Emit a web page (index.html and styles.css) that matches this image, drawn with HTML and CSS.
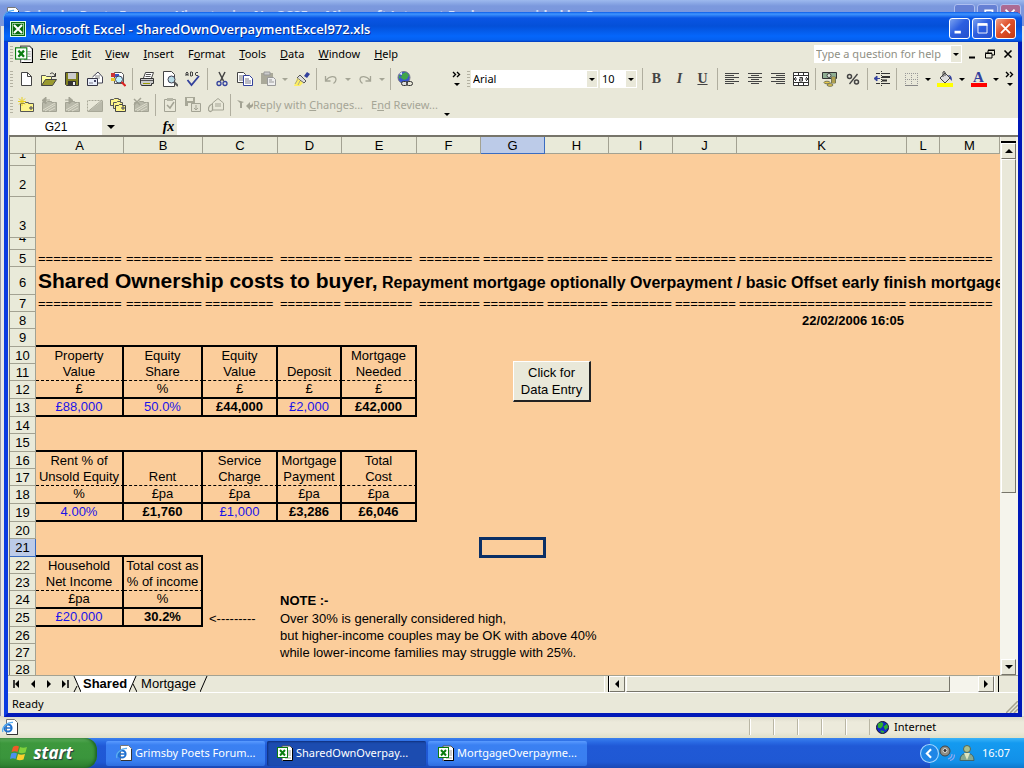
FILE: index.html
```html
<!DOCTYPE html>
<html lang="en">
<head>
    <meta charset="UTF-8">
    <meta name="viewport" content="width=device-width, initial-scale=1.0">
    <title>Microsoft Excel - SharedOwnOverpaymentExcel972.xls</title>
    <link rel="stylesheet" href="styles.css">
</head>
<body>
    <!-- Shared icons -->
    <svg class="defs" aria-hidden="true">
        <symbol id="excel" viewBox="0 0 16 16">
            <path d="M5 1h8l3 3v12H5z" fill="#fff" stroke="#555"/>
            <path d="M15.500 3v12.500H6" fill="none" stroke="#000"/>
            <path d="M11 6h3M11 8h3M11 10h3M8 13h6" stroke="#999"/>
            <rect x=".5" y="2.500" width="10" height="10" fill="#fff" stroke="#0a7d10"/>
            <path d="M3 5l5 5.500M8 5l-5 5.500" stroke="#0a7d10" stroke-width="2"/>
        </symbol>
        <symbol id="ie" viewBox="0 0 16 16">
            <path d="M4.500.500h8l3 3v12h-11z" fill="#fff" stroke="#777"/>
            <path d="M15.500 4v11.500H5" fill="none" stroke="#333"/>
            <circle cx="6" cy="9" r="3.600" fill="none" stroke="#1c6fd0" stroke-width="2"/>
            <path d="M3 9h6.500" stroke="#1c6fd0" stroke-width="1.500"/>
            <path d="M1 13C-1 9 5 3 11 3.500" fill="none" stroke="#5aaef0" stroke-width="1.300"/>
        </symbol>
        <symbol id="folder" viewBox="0 0 16 16">
            <path d="M1.500 14.500v-9h4l1-1h4v1h5v9z" fill="#b9b9aa" stroke="#a3a394"/>
            <path d="M2 13L14 6M4 14l10-6M8 14l6-3" stroke="#dddccc"/>
        </symbol>
    </svg>

    <main class="desktop">
        <section class="ie-window">
            <header class="ie-title">
                <svg class="ico" viewBox="0 0 16 16"><use href="#ie"/></svg>
                <span>Grimsby Poets Forum :: View topic - No GCSEs - Microsoft Internet Explorer provided by Freeserve</span>
                <div class="win-buttons">
                    <button aria-label="Minimise"><svg viewBox="0 0 21 21"><path d="M5 14h7" stroke="#fff" stroke-width="3"/></svg></button>
                    <button aria-label="Restore"><svg viewBox="0 0 21 21"><path d="M8 9V6h8v8h-3M5 9h8v7H5z" fill="none" stroke="#fff" stroke-width="2"/></svg></button>
                    <button class="close" aria-label="Close"><svg viewBox="0 0 21 21"><path d="M5 5l10 10M15 5L5 15" stroke="#fff" stroke-width="2"/></svg></button>
                </div>
            </header>
            <div class="ie-page"></div>
            <footer class="ie-status">
                <svg class="ico" viewBox="0 0 16 16"><use href="#ie"/></svg>
                <span class="ie-message"></span>
                <i></i><i></i><i></i><i></i><i></i>
                <span class="zone">
                    <svg viewBox="0 0 14 14"><circle cx="7" cy="7" r="6.500" fill="#1228c8" stroke="#112"/><path d="M2 3l4-2 2 2-1 3-2 2-3-1zM8 6l4-3 1 4-3 3zM5 10l4 1-1 2-3-1z" fill="#30b030"/></svg>
                    Internet
                </span>
            </footer>
        </section>

        <section class="excel-window">
            <header class="title-bar">
                <svg class="ico" viewBox="0 0 16 16"><rect x=".5" y=".5" width="15" height="15" fill="#0a6a0e" stroke="#dfe"/><rect x="2.500" y="2.500" width="11" height="11" fill="#0a6a0e" stroke="#9c9"/><path d="M4 4l8 8M12 4l-8 8" stroke="#fff" stroke-width="2"/></svg>
                <h1>Microsoft Excel - SharedOwnOverpaymentExcel972.xls</h1>
                <div class="win-buttons">
                    <button aria-label="Minimise"><svg viewBox="0 0 21 21"><path d="M5 14.500h7" stroke="#fff" stroke-width="3"/></svg></button>
                    <button aria-label="Maximise"><svg viewBox="0 0 21 21"><path d="M5.500 6v9.500h10V6" fill="none" stroke="#fff"/><path d="M5 6h11" stroke="#fff" stroke-width="3"/></svg></button>
                    <button class="close" aria-label="Close"><svg viewBox="0 0 21 21"><path d="M5.500 5.500l10 10M15.500 5.500l-10 10" stroke="#fff" stroke-width="2"/></svg></button>
                </div>
            </header>

            <nav class="menu-bar">
                <span class="grip"></span>
                <svg class="doc-ico" viewBox="0 0 16 16"><use href="#excel"/></svg>
                <a href="#"><u>F</u>ile</a>
                <a href="#"><u>E</u>dit</a>
                <a href="#"><u>V</u>iew</a>
                <a href="#"><u>I</u>nsert</a>
                <a href="#">F<u>o</u>rmat</a>
                <a href="#"><u>T</u>ools</a>
                <a href="#"><u>D</u>ata</a>
                <a href="#"><u>W</u>indow</a>
                <a href="#"><u>H</u>elp</a>
                <div class="combo ask">
                    <input type="text" aria-label="Help question" placeholder="Type a question for help">
                    <button aria-label="Show questions"><b class="down"></b></button>
                </div>
                <div class="doc-buttons">
                    <button aria-label="Minimise workbook"><svg viewBox="0 0 10 10"><path d="M2 8.500h6" stroke="#000" stroke-width="2"/></svg></button>
                    <button aria-label="Restore workbook"><svg viewBox="0 0 10 10"><path d="M3 4V1.500h6.500V6H7M3 1h7M.5 4.500h6.500v4.500H.5zM0 4h7" fill="none" stroke="#000"/></svg></button>
                    <button aria-label="Close workbook"><svg viewBox="0 0 10 10"><path d="M1.500 1.500l7 7M8.500 1.500l-7 7" stroke="#000" stroke-width="1.600"/></svg></button>
                </div>
            </nav>

            <div class="toolbar">
                <div class="tools standard">
                    <span class="grip"></span>
                    <button aria-label="New"><svg viewBox="0 0 16 16"><path d="M3.500 1.500h6l4 4v9h-10z" fill="#fff" stroke="#444"/><path d="M9.500 1.500v4h4" fill="none" stroke="#444"/></svg></button>
                    <button aria-label="Open"><svg viewBox="0 0 16 16"><path d="M.5 14.500v-10h4l1 1h5v3" fill="#ffffa0" stroke="#555"/><path d="M.5 14.500l4-6h11l-4 6z" fill="#9a9a30" stroke="#444"/><path d="M9 3c2-2 4-1 5 2M14.500 2v3.500H11" fill="none" stroke="#333"/></svg></button>
                    <button aria-label="Save"><svg viewBox="0 0 16 16"><path d="M1.500 1.500h13v13h-12l-1-1z" fill="#808020" stroke="#333"/><path d="M4 2h8v6H4z" fill="#ccc"/><path d="M4 10h8v4H4z" fill="#333"/><path d="M9 11h2v3H9z" fill="#eee"/></svg></button>
                    <button aria-label="E-mail"><svg viewBox="0 0 16 16"><path d="M5.500 6L11 1l4.500 5v6H11" fill="#fff" stroke="#445"/><path d="M8 5h5M8 7h5" stroke="#888"/><path d="M.5 7.500h10v7H.5z" fill="#e8eefa" stroke="#334"/><path d="M7 9h2v2H7z" fill="#446"/><path d="M2 12h4" stroke="#778"/></svg></button>
                    <button aria-label="Search"><svg viewBox="0 0 16 16"><path d="M4.500 1.500h7l2 2v9h-9z" fill="#fff" stroke="#555"/><path d="M1 2h4v4H1z" fill="#c33"/><path d="M5 3h4v3H5z" fill="#3b57c4"/><path d="M1 7h4v3H1z" fill="#e6c62c"/><circle cx="9" cy="8.500" r="3.500" fill="#bff0ff" stroke="#445"/><path d="M11.500 11l4 4" stroke="#d22" stroke-width="2"/></svg></button>
                    <i class="sep"></i>
                    <button aria-label="Print"><svg viewBox="0 0 16 16"><path d="M4.500 7l2-5.500h8l-2 5.500" fill="#fff" stroke="#444"/><path d="M1.500 7.500h13v5h-2v2h-10l-1-2z" fill="#ccc" stroke="#333"/><path d="M4 12.500h7" stroke="#990"/><path d="M2 9.500h12M7 3.500h5M6.500 5.500h5" stroke="#555"/></svg></button>
                    <button aria-label="Print preview"><svg viewBox="0 0 16 16"><path d="M1.500.500h8l3 3v12h-11z" fill="#fff" stroke="#444"/><circle cx="9.500" cy="8.500" r="3.500" fill="#b8dce8" stroke="#445"/><path d="M12 11l4 4" stroke="#555" stroke-width="2"/></svg></button>
                    <button aria-label="Spelling"><svg viewBox="0 0 16 16"><path d="M1 5V2l1-1 1 1v3M1 3.500h2M5.500 5V1H7l1 1-1 1 1 1-1 1zM13 1.500h-2l-.5.500v2l.5.500h2" fill="none" stroke="#444"/><path d="M2.500 9l4 5L14 5" fill="none" stroke="#33419c" stroke-width="1.800"/></svg></button>
                    <i class="sep"></i>
                    <button aria-label="Cut"><svg viewBox="0 0 16 16"><path d="M5 1l4.500 9M11 1L6.500 10" stroke="#444" stroke-width="1.500"/><circle cx="5" cy="12.500" r="2" fill="none" stroke="#33419c" stroke-width="1.300"/><circle cx="11" cy="12.500" r="2" fill="none" stroke="#33419c" stroke-width="1.300"/></svg></button>
                    <button aria-label="Copy"><svg viewBox="0 0 16 16"><path d="M.5 1.500h6l2 2v8h-8z" fill="#fff" stroke="#444"/><path d="M2 5h4M2 7h4M2 9h4" stroke="#777"/><path d="M6.500 4.500h6l3 3v7h-9z" fill="#fff" stroke="#33419c"/><path d="M8 8h4M8 10h6M8 12h6" stroke="#778"/></svg></button>
                    <button aria-label="Paste" disabled><svg viewBox="0 0 16 16"><path d="M1 2h12v11H1z" fill="#aaa99a"/><path d="M4 1h6v3H4z" fill="#ccc" stroke="#999"/><path d="M7.500 6.500h6l2 2v6h-8z" fill="#eee" stroke="#999"/><path d="M9 9h3M9 11h5" stroke="#999"/></svg></button>
                    <button class="drop" aria-label="Paste options" disabled><b class="down"></b></button>
                    <button aria-label="Format painter"><svg viewBox="0 0 16 16"><path d="M10 5l3-4 3 2-3 4z" fill="#33419c"/><path d="M6 4l6 6-2 2-7-5z" fill="#ddd" stroke="#555"/><path d="M3 7l6 5-3 3H0z" fill="#ffef60"/><path d="M4 8l-3 5M6 10l-2 4" stroke="#aa8"/></svg></button>
                    <i class="sep"></i>
                    <button aria-label="Undo" disabled><svg viewBox="0 0 16 16"><path d="M2.500 5v5h5M3 9.500C6 5 13 4 13 8.500c0 2-1 3-2.500 4" fill="none" stroke="#a5a596" stroke-width="1.300"/></svg></button>
                    <button class="drop" aria-label="Undo list" disabled><b class="down"></b></button>
                    <button aria-label="Redo" disabled><svg viewBox="0 0 16 16"><path d="M13.500 5v5h-5M13 9.500C10 5 3 4 3 8.500c0 2 1 3 2.500 4" fill="none" stroke="#a5a596" stroke-width="1.300"/></svg></button>
                    <button class="drop" aria-label="Redo list" disabled><b class="down"></b></button>
                    <i class="sep"></i>
                    <button aria-label="Hyperlink"><svg viewBox="0 0 16 16"><circle cx="7" cy="6.500" r="6" fill="#3a55cf" stroke="#778"/><path d="M5 3l4-2 3 3-2 4-3 1-3-2zM2 4l2 2-2 2z" fill="#3fa64a"/><path d="M2 3l3-2v3z" fill="#dfe8ff"/><rect x="4.500" y="10.500" width="6" height="4" rx="2" fill="#ddd" stroke="#333"/><rect x="9.500" y="10.500" width="6" height="4" rx="2" fill="none" stroke="#333"/></svg></button>
                    <button class="more" aria-label="More standard buttons"><svg viewBox="0 0 9 16"><path d="M1 1l2.500 2.500L1 6M5 1l2.500 2.500L5 6" fill="none" stroke="#000" stroke-width="1.400"/><path d="M2 12h6l-3 3z"/></svg></button>
                </div>
                <div class="tools">
                    <span class="grip"></span>
                    <div class="combo font-name">
                        <input type="text" aria-label="Font" value="Arial">
                        <button aria-label="Show fonts"><b class="down"></b></button>
                    </div>
                    <div class="combo font-size">
                        <input type="text" aria-label="Font size" value="10">
                        <button aria-label="Show sizes"><b class="down"></b></button>
                    </div>
                    <i class="sep"></i>
                    <button class="letter" aria-label="Bold"><b>B</b></button>
                    <button class="letter" aria-label="Italic"><em>I</em></button>
                    <button class="letter" aria-label="Underline"><u>U</u></button>
                    <i class="sep"></i>
                    <button aria-label="Align left"><svg viewBox="0 0 16 16"><path d="M1 2.500h14M1 4.500h9M1 6.500h14M1 8.500h9M1 10.500h14M1 12.500h9" stroke="#444"/></svg></button>
                    <button aria-label="Centre"><svg viewBox="0 0 16 16"><path d="M1 2.500h14M4 4.500h8M1 6.500h14M4 8.500h8M1 10.500h14M4 12.500h8" stroke="#444"/></svg></button>
                    <button aria-label="Align right"><svg viewBox="0 0 16 16"><path d="M1 2.500h14M6 4.500h9M1 6.500h14M6 8.500h9M1 10.500h14M6 12.500h9" stroke="#444"/></svg></button>
                    <button aria-label="Merge and centre"><svg viewBox="0 0 16 16"><path d="M.5 1.500h15v13H.5zM.5 4.500h15M.5 11.500h15M5.500 1.500v3M10.500 1.500v3M5.500 11.500v3M10.500 11.500v3" fill="#fff" stroke="#333"/><path d="M1 8h3M12 8h3M3 6L1 8l2 2M13 6l2 2-2 2M6.500 6.500h3v3.500h-3v-2h3" fill="none" stroke="#333"/></svg></button>
                    <i class="sep"></i>
                    <button aria-label="Currency"><svg viewBox="0 0 16 16"><path d="M.5 1.500h14v6H.5z" fill="#8fae92" stroke="#333"/><circle cx="7" cy="4.500" r="2" fill="#dfe8df" stroke="#444"/><path d="M9.500 6h4v6h-4z" fill="#e8c94a" stroke="#775"/><path d="M9 8h5M9 10h5" stroke="#775"/><ellipse cx="5" cy="11.500" rx="3" ry="1.300" fill="#e8c94a" stroke="#775"/><ellipse cx="8" cy="14" rx="3" ry="1.300" fill="#e8c94a" stroke="#775"/></svg></button>
                    <button aria-label="Percent"><svg viewBox="0 0 16 16"><path d="M12.500 3l-8 10" stroke="#444" stroke-width="1.300"/><circle cx="4.500" cy="5.500" r="2" fill="none" stroke="#444" stroke-width="1.500"/><circle cx="11.500" cy="11" r="2" fill="none" stroke="#444" stroke-width="1.500"/></svg></button>
                    <i class="sep"></i>
                    <button aria-label="Decrease indent"><svg viewBox="0 0 16 16"><path d="M2 2.500h4M8 2.500h8M2 12.500h4M8 12.500h8" stroke="#333"/><path d="M8 6h8M8 9.500h5" stroke="#333" stroke-width="2"/><path d="M7.500 0v16" stroke="#333" stroke-dasharray="1 1"/><path d="M3 5L0 7.500 3 10zM2 7.500h4" fill="#33419c" stroke="#33419c"/></svg></button>
                    <i class="sep"></i>
                    <button aria-label="Borders"><svg viewBox="0 0 16 16"><path d="M2 2.500h13M2 8.500h13M2.500 2v12M8.500 2v12M14.500 2v12" stroke="#999" stroke-dasharray="1 1"/><path d="M2 14.500h13" stroke="#888"/></svg></button>
                    <button class="drop" aria-label="Border styles"><b class="down"></b></button>
                    <button aria-label="Fill colour"><svg viewBox="0 0 16 16"><path d="M3 7l5-5 5 5-5 5z" fill="#ddd" stroke="#444"/><path d="M6 6V1q1-1 2 0v4" fill="none" stroke="#444"/><path d="M11 4c3 0 4 2 4 6l-2-2V6z" fill="#33419c"/><path d="M0 12h16v4H0z" fill="#ff0"/></svg></button>
                    <button class="drop" aria-label="Fill colours"><b class="down"></b></button>
                    <button class="font-colour" aria-label="Font colour"><b>A</b></button>
                    <button class="drop" aria-label="Font colours"><b class="down"></b></button>
                    <button class="more" aria-label="More formatting buttons"><svg viewBox="0 0 9 16"><path d="M1 1l2.500 2.500L1 6M5 1l2.500 2.500L5 6" fill="none" stroke="#000" stroke-width="1.400"/><path d="M2 12h6l-3 3z"/></svg></button>
                </div>
            </div>

            <div class="toolbar">
                <div class="tools">
                    <span class="grip"></span>
                    <button aria-label="New comment"><svg viewBox="0 0 16 16"><path d="M2.500 14.500v-8h4l1-1h3v1h5v8z" fill="#fff68a" stroke="#555"/><path d="M12 10h2v2h-2z" fill="#fff" stroke="#444"/><path d="M4 0v9M0 4.500h8M1 1.500l6 6M7 1.500l-6 6" stroke="#e8cf20"/></svg></button>
                    <button aria-label="Previous comment" disabled><svg viewBox="0 0 16 16"><use href="#folder"/><path d="M9 3H5M5 0v7L1 3.500z" fill="#a3a394" stroke="#a3a394"/></svg></button>
                    <button aria-label="Next comment" disabled><svg viewBox="0 0 16 16"><use href="#folder"/><path d="M1 3h4M5 0v7l4-3.500z" fill="#a3a394" stroke="#a3a394"/></svg></button>
                    <button aria-label="Show comment" disabled><svg viewBox="0 0 16 16"><path d="M.5 14.500v-11h15" fill="none" stroke="#a8a898" stroke-dasharray="2 1"/><path d="M15 4v10H2z" fill="#b9b9aa"/><path d="M15 3L1 14.500h14.500V4" fill="none" stroke="#a8a898"/></svg></button>
                    <button aria-label="Show all comments"><svg viewBox="0 0 16 16"><path d="M.5 8.500v-6h3l1-1h4v1h2v6z" fill="#fff68a" stroke="#555"/><path d="M3.500 11.500v-6h3l1-1h3v1h2v6z" fill="#fff68a" stroke="#555"/><path d="M5.500 14.500v-6h3l1-1h3v1h3v6z" fill="#fff68a" stroke="#444"/><path d="M12 10h2v2h-2z" fill="#fff" stroke="#444"/></svg></button>
                    <button aria-label="Delete comment" disabled><svg viewBox="0 0 16 16"><use href="#folder"/><path d="M1 2l6 6M8 1L1 8" stroke="#a3a394" stroke-width="1.500"/></svg></button>
                    <i class="sep"></i>
                    <button aria-label="Create task" disabled><svg viewBox="0 0 16 16"><path d="M2.500 2.500h11v12h-11z" fill="none" stroke="#a3a394"/><path d="M5 1h6v3H5z" fill="#b5b5a6"/><path d="M5 8l3 3 4-6" fill="none" stroke="#a3a394" stroke-width="1.500"/></svg></button>
                    <button aria-label="Update file" disabled><svg viewBox="0 0 16 16"><path d="M0 0h10v9H0z" fill="#a8a898"/><path d="M2 1h6v3H2zM3 6h3v3H3z" fill="#e9e8d8"/><path d="M6.500 6.500h9v8h-9z" fill="#e2e1d2" stroke="#a3a394"/><path d="M11 8v5M9 11l2 2 2-2" fill="none" stroke="#a3a394"/></svg></button>
                    <button aria-label="Send as attachment" disabled><svg viewBox="0 0 16 16"><path d="M4.500 6L10 1.500 15.500 6v7h-11z" fill="none" stroke="#a3a394"/><path d="M7 7h6M7 9h6" stroke="#a3a394"/><path d="M4 7q-4 2-3.500 6 2 3 4 0V9" fill="none" stroke="#a3a394" stroke-width="1.300"/></svg></button>
                    <i class="sep"></i>
                    <button class="text" disabled><svg viewBox="0 0 16 16"><path d="M0 3l7 2-2 1v5H3V6zM9 9l4-4v3q3 0 3-4v5q-1 2-3 2v2z" fill="#a3a394"/></svg><span>Reply with <u>C</u>hanges...</span></button>
                    <button class="text" disabled><span>E<u>n</u>d Review...</span></button>
                    <button class="drop low" aria-label="Toolbar options"><b class="down"></b></button>
                </div>
            </div>

            <div class="formula-bar">
                <input class="name-box" type="text" aria-label="Name box" value="G21">
                <button class="names" aria-label="Show names"><b class="down"></b></button>
                <button class="fx" aria-label="Insert function">fx</button>
                <input class="formula" type="text" aria-label="Formula">
            </div>

            <div class="workbook">
                <div class="sheet">
                    <table>
                        <colgroup>
                            <col class="w26"><col class="w88"><col class="w79"><col class="w75"><col class="w64"><col class="w75"><col class="w64"><col class="w64"><col class="w64"><col class="w64"><col class="w64"><col class="w170"><col class="w33"><col>
                        </colgroup>
                        <thead>
                            <tr><th></th><th>A</th><th>B</th><th>C</th><th>D</th><th>E</th><th>F</th><th class="current">G</th><th>H</th><th>I</th><th>J</th><th>K</th><th>L</th><th>M</th></tr>
                        </thead>
                        <tbody>
                            <tr class="h12"><th><div class="squashed">1</div></th><td colspan="13"></td></tr>
                            <tr class="h31"><th>2</th><td colspan="13"></td></tr>
                            <tr class="h41"><th>3</th><td colspan="13"></td></tr>
                            <tr class="h12"><th><div class="squashed">4</div></th><td colspan="13"></td></tr>
                            <tr><th>5</th><td>===========</td><td>==========</td><td>=========</td><td>========</td><td>=========</td><td>========</td><td>========</td><td>========</td><td>========</td><td>========</td><td>======================</td><td colspan="2">===========</td></tr>
                            <tr class="h27"><th>6</th><td class="heading" colspan="13"><strong>Shared Ownership costs to buyer,</strong> Repayment mortgage optionally Overpayment / basic Offset early finish mortgage</td></tr>
                            <tr><th>7</th><td>===========</td><td>==========</td><td>=========</td><td>========</td><td>=========</td><td>========</td><td>========</td><td>========</td><td>========</td><td>========</td><td>======================</td><td colspan="2">===========</td></tr>
                            <tr><th>8</th><td colspan="10"></td><td class="date total">22/02/2006 16:05</td><td colspan="2"></td></tr>
                            <tr class="h18"><th>9</th><td class="rule" colspan="5"></td><td colspan="8"></td></tr>

                            <tr><th>10</th><td class="box">Property</td><td class="box">Equity</td><td class="box">Equity</td><td class="box"></td><td class="box">Mortgage</td><td colspan="8"></td></tr>
                            <tr class="dash"><th>11</th><td class="box">Value</td><td class="box">Share</td><td class="box">Value</td><td class="box">Deposit</td><td class="box">Needed</td><td colspan="8"></td></tr>
                            <tr class="h18"><th>12</th><td class="box rule">£</td><td class="box rule">%</td><td class="box rule">£</td><td class="box rule">£</td><td class="box rule">£</td><td colspan="8"></td></tr>
                            <tr class="h18"><th>13</th><td class="box rule entry">£88,000</td><td class="box rule entry">50.0%</td><td class="box rule total">£44,000</td><td class="box rule entry">£2,000</td><td class="box rule total">£42,000</td><td colspan="8"></td></tr>
                            <tr><th>14</th><td colspan="13"></td></tr>
                            <tr class="h18"><th>15</th><td class="rule" colspan="5"></td><td colspan="8"></td></tr>

                            <tr><th>16</th><td class="box">Rent % of</td><td class="box"></td><td class="box">Service</td><td class="box">Mortgage</td><td class="box">Total</td><td colspan="8"></td></tr>
                            <tr class="dash"><th>17</th><td class="box">Unsold Equity</td><td class="box">Rent</td><td class="box">Charge</td><td class="box">Payment</td><td class="box">Cost</td><td colspan="8"></td></tr>
                            <tr class="h18"><th>18</th><td class="box rule">%</td><td class="box rule">£pa</td><td class="box rule">£pa</td><td class="box rule">£pa</td><td class="box rule">£pa</td><td colspan="8"></td></tr>
                            <tr class="h18"><th>19</th><td class="box rule entry">4.00%</td><td class="box rule total">£1,760</td><td class="box rule entry">£1,000</td><td class="box rule total">£3,286</td><td class="box rule total">£6,046</td><td colspan="8"></td></tr>
                            <tr><th>20</th><td colspan="13"></td></tr>
                            <tr class="h18"><th class="current">21</th><td class="rule" colspan="2"></td><td colspan="4"></td><td class="selected"></td><td colspan="6"></td></tr>

                            <tr><th>22</th><td class="box">Household</td><td class="box">Total cost as</td><td colspan="11"></td></tr>
                            <tr class="dash"><th>23</th><td class="box">Net Income</td><td class="box">% of income</td><td colspan="11"></td></tr>
                            <tr class="h18"><th>24</th><td class="box rule">£pa</td><td class="box rule">%</td><td></td><td class="total" colspan="10">NOTE :-</td></tr>
                            <tr class="h18"><th>25</th><td class="box rule entry">£20,000</td><td class="box rule total">30.2%</td><td class="arrow">&lt;---------</td><td colspan="10">Over 30% is generally considered high,</td></tr>
                            <tr><th>26</th><td colspan="3"></td><td colspan="10">but higher-income couples may be OK with above 40%</td></tr>
                            <tr><th>27</th><td colspan="3"></td><td colspan="10">while lower-income families may struggle with 25%.</td></tr>
                            <tr><th>28</th><td colspan="13"></td></tr>
                        </tbody>
                    </table>
                    <button class="data-entry">Click for<br>Data Entry</button>
                </div>
                <div class="vscroll">
                    <span class="split"></span>
                    <button aria-label="Scroll up"><b class="up"></b></button>
                    <span class="thumb"></span>
                    <span class="track"></span>
                    <button aria-label="Scroll down"><b class="down"></b></button>
                </div>
            </div>

            <div class="sheet-tabs">
                <button class="nav" aria-label="First sheet"><svg viewBox="0 0 8 8"><path d="M1 0v8" stroke="#000" stroke-width="1.500"/><path d="M6 0v8L2 4z"/></svg></button>
                <button class="nav" aria-label="Previous sheet"><svg viewBox="0 0 8 8"><path d="M6 0v8L2 4z"/></svg></button>
                <button class="nav" aria-label="Next sheet"><svg viewBox="0 0 8 8"><path d="M2 0v8l4-4z"/></svg></button>
                <button class="nav" aria-label="Last sheet"><svg viewBox="0 0 8 8"><path d="M1 0v8l4-4z"/><path d="M7 0v8" stroke="#000" stroke-width="1.500"/></svg></button>
                <svg class="edge" viewBox="0 0 8 16"><path d="M1 0h7v16z" fill="#fff"/><path d="M1 0l7 16M4 10l-3 6" stroke="#000"/></svg>
                <button class="tab active">Shared</button>
                <svg class="edge" viewBox="0 0 8 16"><path d="M0 0h7L0 16z" fill="#fff"/><path d="M7 0L0 16M4 8l4 8" stroke="#000"/></svg>
                <button class="tab">Mortgage</button>
                <svg class="edge" viewBox="0 0 8 16"><path d="M7 0L0 16" stroke="#000"/></svg>
                <div class="hscroll">
                    <span class="split"></span>
                    <button aria-label="Scroll left"><b class="left"></b></button>
                    <span class="thumb"></span>
                    <span class="track"></span>
                    <button aria-label="Scroll right"><b class="right"></b></button>
                    <span class="split"></span>
                </div>
            </div>

            <footer class="status-bar">
                <span>Ready</span>
                <svg viewBox="0 0 12 12"><path d="M0 12L12 0M4 12l8-8M8 12l4-4" stroke="#a5a28e" stroke-width="1.500"/></svg>
            </footer>
        </section>
    </main>

    <footer class="taskbar">
        <button class="start">
            <svg viewBox="0 0 20 18"><path d="M3 3q3-2 6-.5L7.500 8Q5 6.500 1.500 8z" fill="#ef5b28"/><path d="M10 3q3 1.500 7 0l-1.500 5.500q-4 1.500-7 0z" fill="#7fd13b"/><path d="M1.200 9.500Q4 8 7 9.500L5.500 15Q3 13.500 0 15z" fill="#4a90ee"/><path d="M8 10q3 1.500 7 0l-1.500 5.500q-4 1.500-7 0z" fill="#fbd02d"/></svg>
            start
        </button>
        <button class="task"><svg class="ico" viewBox="0 0 16 16"><use href="#ie"/></svg>Grimsby Poets Forum...</button>
        <button class="task active"><svg class="ico" viewBox="0 0 16 16"><use href="#excel"/></svg>SharedOwnOverpay...</button>
        <button class="task"><svg class="ico" viewBox="0 0 16 16"><use href="#excel"/></svg>MortgageOverpayme...</button>
        <div class="tray">
            <button class="expand" aria-label="Show hidden icons"><svg viewBox="0 0 18 18"><circle cx="9" cy="9" r="8.500" fill="#1f86e6" stroke="#a8d8ff"/><path d="M10.500 5L6.500 9l4 4" fill="none" stroke="#fff" stroke-width="2"/></svg></button>
            <svg class="ico" viewBox="0 0 16 16"><circle cx="6" cy="6" r="5" fill="#8f8f85" stroke="#444"/><circle cx="6" cy="5.500" r="2" fill="#333" stroke="#ddd"/><path d="M9 14q4-1 4-5M11 15.500q4.500-1 4.500-6" fill="none" stroke="#8ea8f0" stroke-width="1.200"/></svg>
            <svg class="ico" viewBox="0 0 16 16"><path d="M1 15.500q0-6 5-7h4q5 1 5 7z" fill="#86a890" stroke="#466"/><path d="M5 8l3 7 3-7z" fill="#dfe6c0"/><circle cx="8" cy="4" r="3.500" fill="#a9c08c" stroke="#565"/></svg>
            <time>16:07</time>
        </div>
    </footer>
</body>
</html>
```
FILE: styles.css
```css
* {
    box-sizing: border-box;
}
body {
    margin: 0;
    height: 100vh;
    display: flex;
    flex-direction: column;
    overflow: hidden;
    font-family: "Noto Sans", sans-serif;
    font-size: 11px;
    line-height: 16px;
    color: #000;
}
button, input {
    font: inherit;
    color: inherit;
    margin: 0;
    padding: 0;
    border: none;
    background: none;
    border-radius: 0;
}
button {
    display: flex;
    align-items: center;
    justify-content: center;
    flex-shrink: 0;
}
svg {
    flex-shrink: 0;
}
.defs {
    display: none;
}
.ico {
    width: 16px;
    height: 16px;
}

/* small arrows */
.down, .up, .left, .right {
    width: 0;
    height: 0;
    border: 3px solid transparent;
}
.down {
    border-top-color: #000;
    border-bottom: none;
}
.up {
    border-bottom-color: #000;
    border-top: none;
}
.left {
    border-width: 4px;
    border-right-color: #000;
    border-left: none;
}
.right {
    border-width: 4px;
    border-left-color: #000;
    border-right: none;
}
:disabled .down {
    border-top-color: #a5a596;
}

/* browser window behind */
.desktop {
    flex: 1;
    min-height: 0;
    position: relative;
}
.ie-window {
    height: 100%;
    display: flex;
    flex-direction: column;
    background: #eceadd;
}
.ie-title {
    height: 26px;
    padding: 3px 3px 0 3px;
    display: flex;
    align-items: center;
    gap: 3px;
    overflow: hidden;
    background: linear-gradient(#9db9ee, #7b98dd 6px, #7a95dc);
    color: #d5dff8;
    font-family: "Open Sans", sans-serif;
    font-weight: 700;
    font-size: 13px;
    white-space: nowrap;
}
.ie-page {
    flex: 1;
    background: #e6e6e6;
    border-left: 1px solid #99a;
}
.ie-status {
    height: 22px;
    padding: 0 2px;
    display: flex;
    align-items: center;
    background: linear-gradient(#d9d7c8, #eceadb 6px, #eceadb 16px, #dfe0c8);
}
.ie-message {
    flex: 1;
}
.ie-status i {
    width: 24px;
    height: 16px;
    border-left: 1px solid #b9b6a4;
    box-shadow: inset 1px 0 #fff;
}
.zone {
    width: 153px;
    height: 16px;
    padding-left: 6px;
    display: flex;
    align-items: center;
    gap: 5px;
    border-left: 1px solid #b9b6a4;
}
.zone svg {
    width: 13px;
    height: 13px;
}
.win-buttons {
    margin-left: auto;
    display: flex;
    gap: 2px;
}
.win-buttons button {
    width: 21px;
    height: 21px;
    border: 1px solid #fff;
    border-radius: 3px;
    background: linear-gradient(135deg, #7ba2f0, #2d5fe0 45%, #2450cc);
}
.win-buttons .close {
    background: linear-gradient(135deg, #f0a088, #e0512b 45%, #c23a14);
}
.ie-title .win-buttons button {
    border-color: #aebff0;
    background: #6580d4;
}
.ie-title .win-buttons .close {
    background: #ac6a92;
}

/* excel window */
.excel-window {
    position: absolute;
    top: 12px;
    right: 2px;
    bottom: 21px;
    left: 4px;
    display: flex;
    flex-direction: column;
    border: 4px solid #0a3ae0;
    border-top: none;
    border-color: #0a3ae0 #0018b8 #0018b8 #0a3ae0;
    border-radius: 7px 7px 0 0;
    background: #e9e8d9;
}
.title-bar {
    height: 30px;
    margin: 0 -4px;
    padding: 3px 6px 0 6px;
    display: flex;
    align-items: center;
    gap: 4px;
    border-radius: 7px 7px 0 0;
    background: linear-gradient(#0a5be8, #3f95ff 2px, #0a55e4 6px, #0450d8 14px, #0566fb 24px, #0560f0 28px, #0338b8);
    color: #fff;
}
.title-bar h1 {
    margin: 0;
    font-family: "Open Sans", sans-serif;
    font-size: 13px;
    font-weight: 600;
    white-space: nowrap;
    text-shadow: 1px 1px #0b2c8c;
}
.grip {
    width: 3px;
    height: 16px;
    margin: 0 1px 0 2px;
    background: repeating-linear-gradient(#b4b2a2 0 1px, transparent 1px 3px);
}
.menu-bar {
    height: 24px;
    display: flex;
    align-items: center;
    white-space: nowrap;
}
.menu-bar a {
    padding: 0 7px;
    color: #000;
    text-decoration: none;
}
.doc-ico {
    width: 18px;
    height: 18px;
    margin-left: 1px;
}
.combo {
    height: 18px;
    display: flex;
    background: #fff;
}
.combo input {
    flex: 1;
    min-width: 0;
    padding-left: 2px;
}
.combo input::placeholder {
    color: #8f8f84;
}
.combo button {
    width: 12px;
    border: 1px solid #fff;
    background: #e9e8d9;
}
.ask {
    width: 148px;
    margin-left: auto;
}
.doc-buttons {
    display: flex;
    gap: 8px;
    padding: 0 5px 0 5px;
}
.doc-buttons svg {
    width: 10px;
    height: 10px;
}

/* toolbars */
.toolbar {
    height: 26px;
    display: flex;
    align-items: center;
}
.tools {
    display: flex;
    align-items: center;
}
.standard {
    width: 458px;
}
.tools button {
    width: 23px;
    height: 22px;
}
.tools button svg {
    width: 16px;
    height: 16px;
}
.tools .drop {
    width: 11px;
}
.tools .low {
    align-items: flex-end;
}
.tools .more {
    width: 17px;
}
.tools .more svg {
    width: 9px;
    height: 16px;
}
.standard .more {
    margin-left: auto;
}
.tools .combo {
    margin-right: 2px;
}
.tools .combo button {
    width: 12px;
    height: 18px;
}
.font-name {
    width: 127px;
}
.font-size {
    width: 37px;
}
.sep {
    width: 6px;
    height: 22px;
    background: linear-gradient(#b0ae9f, #b0ae9f) center / 1px 100% no-repeat;
}
.tools .letter {
    font-family: "Liberation Serif", serif;
    font-size: 14px;
    font-weight: 700;
    color: #444;
}
.tools .font-colour {
    font-family: "Liberation Serif", serif;
    font-size: 15px;
    line-height: 12px;
    color: #33419c;
}
.font-colour b {
    width: 16px;
    border-bottom: 4px solid #f00;
}
.tools .text {
    width: auto;
    padding: 0 4px;
    color: #a5a596;
    white-space: nowrap;
}

/* formula bar */
.formula-bar {
    height: 17px;
    padding-left: 2px;
    display: flex;
}
.name-box {
    width: 92px;
    text-align: center;
    background: #fff;
    font-family: "Liberation Sans", sans-serif;
    font-size: 12px;
}
.names {
    width: 18px;
}
.names .down {
    border-width: 4px 4px 0;
}
.fx {
    width: 57px;
    padding-left: 40px;
    font-family: "Liberation Serif", serif;
    font-size: 14px;
    font-style: italic;
    font-weight: 700;
}
.formula {
    flex: 1;
    background: #fff;
}

/* sheet */
.workbook {
    flex: 1;
    min-height: 0;
    margin-left: 1px;
    display: flex;
    border-top: 2px solid #77756a;
    border-left: 1px solid #77756a;
}
.sheet {
    flex: 1;
    min-width: 0;
    position: relative;
    overflow: hidden;
    background: #fbcd9b;
    font-family: "Liberation Sans", sans-serif;
    font-size: 13px;
    line-height: 15px;
}
table {
    width: 100%;
    table-layout: fixed;
    border-collapse: separate;
    border-spacing: 0;
}
.w26 { width: 26px; }
.w33 { width: 33px; }
.w64 { width: 64px; }
.w75 { width: 75px; }
.w79 { width: 79px; }
.w88 { width: 88px; }
.w170 { width: 170px; }
tr { height: 17px; }
.h12 { height: 12px; }
.h18 { height: 18px; }
.h27 { height: 27px; }
.h31 { height: 31px; }
.h41 { height: 41px; }
th {
    padding: 0;
    font-weight: 400;
    vertical-align: bottom;
    background: #e9ead9;
    border-right: 1px solid #a3a292;
    border-bottom: 1px solid #a3a292;
}
th.current {
    background: #bccbe8;
    border-color: #3a6cc0;
}
.squashed {
    height: 11px;
    line-height: 0;
    overflow: hidden;
}
.h18 th {
    padding-bottom: 1px;
}
.h27 th, .h31 th, .h41 th {
    padding-bottom: 4px;
}
td {
    padding: 0 0 1px 2px;
    vertical-align: bottom;
    white-space: nowrap;
}
.h12 td, .h12 th {
    padding: 0;
}
.box {
    padding: 0 0 1px;
    text-align: center;
    border-right: 2px solid #000;
}
.rule {
    border-bottom: 2px solid #000;
}
.dash .box {
    border-bottom: 1px dashed #000;
}
.entry {
    color: #1a14e8;
}
.total {
    font-weight: 700;
}
.date {
    padding-right: 3px;
    text-align: right;
}
.arrow {
    padding-left: 6px;
}
.heading {
    padding: 2px 0 0 2px;
    font-size: 16px;
    font-weight: 700;
    line-height: 24px;
}
.heading strong {
    font-size: 21px;
}
.selected {
    position: relative;
}
.selected::after {
    content: "";
    position: absolute;
    inset: -2px -1px -1px -2px;
    border: 3px solid #0a2f66;
}
.data-entry {
    position: absolute;
    top: 224px;
    left: 503px;
    width: 78px;
    height: 41px;
    line-height: 17px;
    background: #e9e8d9;
    border: 1px solid #fff;
    border-right: 2px solid #222;
    border-bottom: 2px solid #222;
}

/* scroll bars */
.vscroll {
    width: 18px;
    padding: 0 2px 0 1px;
    display: flex;
    flex-direction: column;
    background: #f5f4ec;
}
.vscroll button, .hscroll button, .thumb {
    background: #e9e8d9;
    border: 1px solid #fff;
    border-right-color: #77756a;
    border-bottom-color: #77756a;
}
.vscroll button {
    height: 16px;
}
.vscroll .split {
    height: 6px;
    border-bottom: 2px solid #000;
    background: #e9e8d9;
}
.vscroll .down, .vscroll .up {
    border-left-width: 4px;
    border-right-width: 4px;
}
.vscroll .down {
    border-top-width: 4px;
}
.vscroll .up {
    border-bottom-width: 4px;
}
.vscroll .thumb {
    flex: 2;
}
.vscroll .track {
    flex: 1;
}

/* sheet tabs */
.sheet-tabs {
    height: 17px;
    padding: 0 19px 0 1px;
    display: flex;
    border-top: 1px solid #a3a292;
    font-family: "Liberation Sans", sans-serif;
    font-size: 12px;
}
.nav {
    width: 16px;
}
.nav svg {
    width: 8px;
    height: 8px;
}
.edge {
    width: 8px;
    height: 16px;
}
.tab {
    padding: 0 4px;
}
.tab.active {
    padding: 0 2px;
    background: #fff;
    font-size: 13px;
    font-weight: 700;
}
.edge + .tab:not(.active) {
    font-size: 13px;
}
.hscroll {
    width: 395px;
    margin-left: auto;
    display: flex;
    background: #f5f4ec;
}
.hscroll button {
    width: 16px;
}
.hscroll .split {
    width: 5px;
    border-left: 1px solid #fff;
    border-right: 1px solid #000;
    background: #e9e8d9;
}
.hscroll .thumb {
    flex: 1;
    margin-left: 1px;
}
.hscroll .track {
    width: 28px;
}
.status-bar {
    height: 21px;
    padding: 1px 0 0 4px;
    display: flex;
    align-items: center;
    justify-content: space-between;
    border-top: 1px solid #fff;
}
.status-bar svg {
    width: 12px;
    height: 12px;
    align-self: flex-end;
}

/* taskbar */
.taskbar {
    height: 30px;
    display: flex;
    align-items: center;
    background: linear-gradient(#3a80ee, #2a6be4 4px, #2059d6 8px, #1f58d4 24px, #1a47b4);
    color: #fff;
}
.start {
    width: 97px;
    height: 30px;
    margin-right: 9px;
    padding-right: 14px;
    gap: 3px;
    border-radius: 0 12px 12px 0;
    background: linear-gradient(#5fae5f, #3d983d 5px, #3a953c 20px, #2b7c2e);
    box-shadow: inset -2px 0 3px #1e6423;
    font-family: "Open Sans", sans-serif;
    font-size: 17px;
    font-style: italic;
    font-weight: 700;
    text-shadow: 1px 1px 1px #234;
}
.start svg {
    width: 20px;
    height: 18px;
}
.task {
    width: 159px;
    height: 25px;
    margin-right: 2px;
    padding-left: 10px;
    justify-content: flex-start;
    gap: 3px;
    border-radius: 2px;
    background: linear-gradient(#5a9bff, #3a80f2 4px, #3a7ff0 20px, #2f6fe0);
    white-space: nowrap;
}
.task.active {
    background: #1c4cb0;
    box-shadow: inset 1px 1px 2px #0f2f7c;
}
.tray {
    height: 30px;
    min-width: 92px;
    margin-left: auto;
    padding-right: 14px;
    display: flex;
    align-items: center;
    background: linear-gradient(#3cb4f8, #149af0 5px, #1290e8 24px, #0f78cc);
}
.tray .ico {
    margin-right: 4px;
}
.expand {
    margin-left: -10px;
}
.expand svg {
    width: 19px;
    height: 19px;
}
.tray time {
    margin-left: 3px;
}
```
